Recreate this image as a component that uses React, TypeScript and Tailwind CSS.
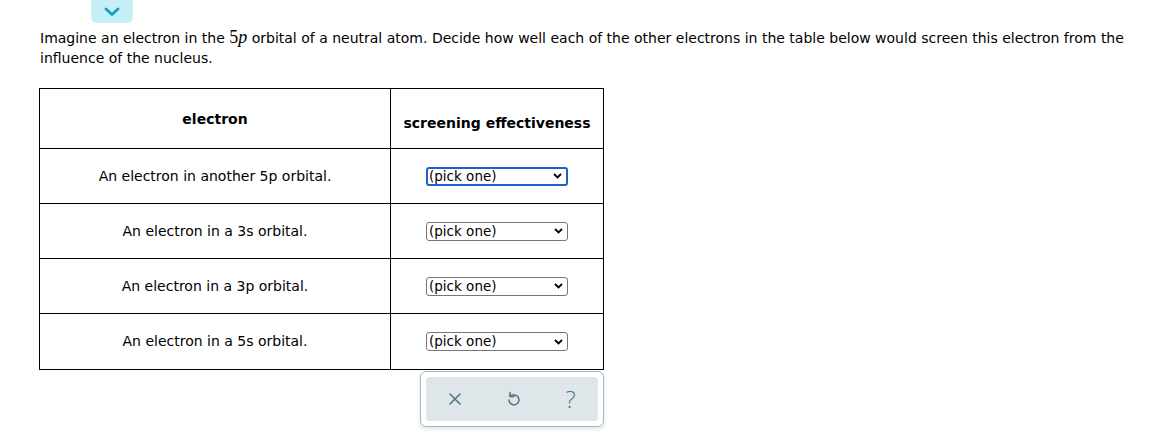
import React from 'react';

const rows = [
  'An electron in another 5p orbital.',
  'An electron in a 3s orbital.',
  'An electron in a 3p orbital.',
  'An electron in a 5s orbital.',
];

const PickOne: React.FC<{ focused?: boolean }> = ({ focused }) => (
  <div
    className={`relative mx-auto w-[142px] h-[19px] bg-white rounded-[3px] ${
      focused ? 'border-2 border-[#1d5fd1]' : 'border border-[#767676]'
    }`}
  >
    <select
      defaultValue=""
      className={`block appearance-none w-full h-full py-0 bg-transparent outline-none text-[13.5px] leading-[15px] text-black ${
        focused ? 'pl-[1px]' : 'pl-[2px]'
      }`}
    >
      <option value="">(pick one)</option>
      <option>completely</option>
      <option>partially</option>
      <option>not at all</option>
    </select>
    <svg
      className="absolute right-[4px] top-1/2 -translate-y-1/2 pointer-events-none"
      width="9"
      height="6"
      viewBox="0 0 9 6"
    >
      <path d="M1 1l3.5 3.5L8 1" fill="none" stroke="#000" strokeWidth="1.8" />
    </svg>
  </div>
);

export default function App() {
  return (
    <div className="w-[1164px] h-[446px] bg-white text-black font-['DejaVu_Sans',Verdana,sans-serif] text-[14px] relative">
      <div className="absolute left-[91px] top-0 w-[42px] h-[23px] bg-[#c6eff5] rounded-b-[6px] flex items-center justify-center">
        <svg width="18" height="11" viewBox="0 0 18 11">
          <path d="M3 3l6 5.5L15 3" fill="none" stroke="#1aa3c4" strokeWidth="3" strokeLinecap="round" strokeLinejoin="round" />
        </svg>
      </div>

      <div className="pt-[28px] pl-[40px] pr-[28px]">
        <p className="leading-[20px]">
          Imagine an electron in the{' '}
          <span className="font-['Liberation_Serif',serif] text-[18px] leading-none">
            5<i>p</i>
          </span>{' '}
          orbital of a neutral atom. Decide how well each of the other electrons in the table below would screen this electron from the influence of the nucleus.
        </p>
      </div>

      <div className="ml-[39px] mt-[20px] w-[565px]">
        <table className="w-full border-collapse">
          <thead>
            <tr className="h-[60px]">
              <th className="w-[351px] border border-black font-bold align-middle pt-[2px]">electron</th>
              <th className="border border-black font-bold align-middle pt-[10px]">screening effectiveness</th>
            </tr>
          </thead>
          <tbody>
            {rows.map((r, i) => (
              <tr key={r} className={i === 3 ? 'h-[56px]' : 'h-[55px]'}>
                <td className="border border-black text-center align-middle">{r}</td>
                <td className="border border-black align-middle">
                  <PickOne focused={i === 0} />
                </td>
              </tr>
            ))}
          </tbody>
        </table>

        <div className="flex justify-end">
          <div className="w-[184px] h-[56px] mt-[1px] border border-[#9fbcc4] rounded-[6px] bg-white p-[5px] shadow-[0_2px_4px_rgba(0,0,0,0.12)]">
            <div className="h-full bg-[#dfe6e9] rounded-[4px] flex items-center justify-around">
              <svg width="14" height="14" viewBox="0 0 14 14">
                <path d="M2 2l10 10M12 2L2 12" stroke="#4a7380" strokeWidth="1.5" strokeLinecap="round" />
              </svg>
              <svg width="14" height="16" viewBox="0 0 14 16">
                <path d="M3.3 5.5A5 5 0 1 1 2 9" fill="none" stroke="#4a7380" strokeWidth="1.5" strokeLinecap="round" />
                <path d="M3 1.5v4h4" fill="none" stroke="#4a7380" strokeWidth="1.5" strokeLinecap="round" strokeLinejoin="round" />
              </svg>
              <span className="text-[24px] leading-none text-[#4a7380] font-['Open_Sans',sans-serif] font-light">?</span>
            </div>
          </div>
        </div>
      </div>
    </div>
  );
}
